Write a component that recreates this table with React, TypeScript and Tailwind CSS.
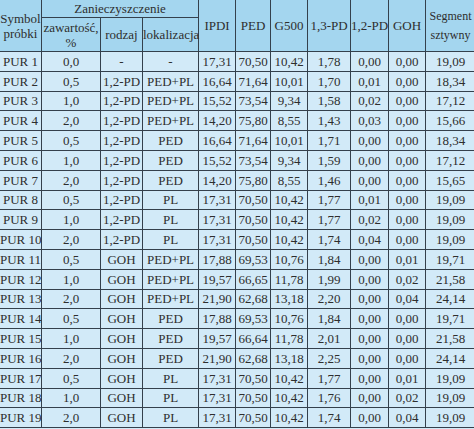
const rows: string[][] = [
  ['PUR 1', '0,0', '-', '-', '17,31', '70,50', '10,42', '1,78', '0,00', '0,00', '19,09'],
  ['PUR 2', '0,5', '1,2-PD', 'PED+PL', '16,64', '71,64', '10,01', '1,70', '0,01', '0,00', '18,34'],
  ['PUR 3', '1,0', '1,2-PD', 'PED+PL', '15,52', '73,54', '9,34', '1,58', '0,02', '0,00', '17,12'],
  ['PUR 4', '2,0', '1,2-PD', 'PED+PL', '14,20', '75,80', '8,55', '1,43', '0,03', '0,00', '15,66'],
  ['PUR 5', '0,5', '1,2-PD', 'PED', '16,64', '71,64', '10,01', '1,71', '0,00', '0,00', '18,34'],
  ['PUR 6', '1,0', '1,2-PD', 'PED', '15,52', '73,54', '9,34', '1,59', '0,00', '0,00', '17,12'],
  ['PUR 7', '2,0', '1,2-PD', 'PED', '14,20', '75,80', '8,55', '1,46', '0,00', '0,00', '15,65'],
  ['PUR 8', '0,5', '1,2-PD', 'PL', '17,31', '70,50', '10,42', '1,77', '0,01', '0,00', '19,09'],
  ['PUR 9', '1,0', '1,2-PD', 'PL', '17,31', '70,50', '10,42', '1,77', '0,02', '0,00', '19,09'],
  ['PUR 10', '2,0', '1,2-PD', 'PL', '17,31', '70,50', '10,42', '1,74', '0,04', '0,00', '19,09'],
  ['PUR 11', '0,5', 'GOH', 'PED+PL', '17,88', '69,53', '10,76', '1,84', '0,00', '0,01', '19,71'],
  ['PUR 12', '1,0', 'GOH', 'PED+PL', '19,57', '66,65', '11,78', '1,99', '0,00', '0,02', '21,58'],
  ['PUR 13', '2,0', 'GOH', 'PED+PL', '21,90', '62,68', '13,18', '2,20', '0,00', '0,04', '24,14'],
  ['PUR 14', '0,5', 'GOH', 'PED', '17,88', '69,53', '10,76', '1,84', '0,00', '0,00', '19,71'],
  ['PUR 15', '1,0', 'GOH', 'PED', '19,57', '66,64', '11,78', '2,01', '0,00', '0,00', '21,58'],
  ['PUR 16', '2,0', 'GOH', 'PED', '21,90', '62,68', '13,18', '2,25', '0,00', '0,00', '24,14'],
  ['PUR 17', '0,5', 'GOH', 'PL', '17,31', '70,50', '10,42', '1,77', '0,00', '0,01', '19,09'],
  ['PUR 18', '1,0', 'GOH', 'PL', '17,31', '70,50', '10,42', '1,76', '0,00', '0,02', '19,09'],
  ['PUR 19', '2,0', 'GOH', 'PL', '17,31', '70,50', '10,42', '1,74', '0,00', '0,04', '19,09'],
];

const widths = [42, 59, 42, 56, 37, 35, 37, 43, 38, 37, 50];

const font = "font-['Liberation_Serif','Times_New_Roman',serif]";
const th = `${font} border border-[#34404c] bg-[#a4d6ef] font-normal text-center align-middle leading-[15px] p-0 whitespace-nowrap`;
const td = `${font} border border-[#34404c] bg-[#d2eaf8] text-center align-middle p-0 h-[19.8px] leading-none whitespace-nowrap`;

export default function App() {
  return (
    <div className={`w-[474px] h-[429px] overflow-hidden bg-[#d2eaf8] ${font}`}>
      <table className={`table-fixed border-collapse ml-[-1px] mt-[-1px] w-[476px] text-[13px] text-[#2e2e2e] ${font}`}>
        <colgroup>
          {widths.map((w, i) => (
            <col key={i} style={{ width: w }} />
          ))}
        </colgroup>
        <thead>
          <tr>
            <th rowSpan={2} className={th}>
              Symbol<br />próbki
            </th>
            <th colSpan={3} className={`${th} h-[18px]`}>
              Zanieczyszczenie
            </th>
            <th rowSpan={2} className={th}>IPDI</th>
            <th rowSpan={2} className={th}>PED</th>
            <th rowSpan={2} className={th}>G500</th>
            <th rowSpan={2} className={th}>1,3-PD</th>
            <th rowSpan={2} className={th}>1,2-PD</th>
            <th rowSpan={2} className={th}>GOH</th>
            <th rowSpan={2} className={`${th} text-[12px] leading-[19px]`}>
              Segment<br />sztywny
            </th>
          </tr>
          <tr>
            <th className={`${th} h-[34px] leading-[14px]`}>
              zawartość,<br />%
            </th>
            <th className={th}>rodzaj</th>
            <th className={th}>lokalizacja</th>
          </tr>
        </thead>
        <tbody>
          {rows.map((r) => (
            <tr key={r[0]}>
              {r.map((c, i) => (
                <td key={i} className={td}>
                  {c}
                </td>
              ))}
            </tr>
          ))}
        </tbody>
      </table>
    </div>
  );
}
